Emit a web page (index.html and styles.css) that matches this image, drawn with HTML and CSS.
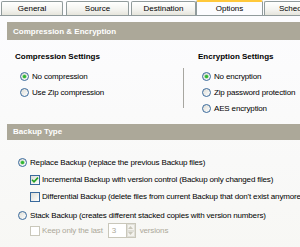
FILE: index.html
```html
<!DOCTYPE html>
<html>
<head>
<meta charset="utf-8">
<link rel="stylesheet" href="styles.css">
</head>
<body>
<div class="tabs">
  <div class="tab w1">General</div>
  <div class="tab w2">Source</div>
  <div class="tab w3">Destination</div>
  <div class="tab sel">Options</div>
  <div class="tab w5">Sched</div>
</div>
<div class="page">
  <div class="hdr h1">Compression &amp; Encryption</div>
  <div class="cols">
    <div class="comp">
      <div class="title">Compression Settings</div>
      <div class="opts">
        <div class="row"><span class="radio on"></span>No compression</div>
        <div class="row"><span class="radio"></span>Use Zip compression</div>
      </div>
    </div>
    <div class="enc">
      <div class="title etitle">Encryption Settings</div>
      <div class="encbody">
        <div class="sep"></div>
        <div class="opts eopts">
          <div class="row"><span class="radio on"></span>No encryption</div>
          <div class="row"><span class="radio"></span>Zip password protection</div>
          <div class="row"><span class="radio"></span>AES encryption</div>
        </div>
      </div>
    </div>
  </div>
  <div class="hdr h2">Backup Type</div>
  <div class="backup">
    <div class="brow r1"><span class="radio on"></span>Replace Backup (replace the previous Backup files)</div>
    <div class="brow sub"><span class="check on"><svg width="8" height="8" viewBox="0 0 8 8"><path d="M1 3.8 L3 5.8 L7 1.6" fill="none" stroke="#21a121" stroke-width="1.6"/></svg></span>Incremental Backup with version control (Backup only changed files)</div>
    <div class="brow sub"><span class="check"></span><span class="clip">Differential Backup (delete files from current Backup that don't exist anymore</span></div>
    <div class="brow r4"><span class="radio"></span>Stack Backup (creates different stacked copies with version numbers)</div>
    <div class="brow sub r5 dis"><span class="check off"></span>Keep only the last<span class="spin"><span class="field">3</span><span class="arrows"><span class="ab"><svg width="5" height="3" viewBox="0 0 5 3"><path d="M0 3 L2.5 0 L5 3Z" fill="#c9c7ba"/></svg></span><span class="ab"><svg width="5" height="3" viewBox="0 0 5 3"><path d="M0 0 L2.5 3 L5 0Z" fill="#c9c7ba"/></svg></span></span></span>versions</div>
  </div>
</div>
</body>
</html>
```
FILE: styles.css
```css
html, body {
  margin: 0;
  padding: 0;
}
body {
  width: 300px;
  height: 247px;
  overflow: hidden;
  font-family: "Liberation Sans", Arial, sans-serif;
  font-size: 8px;
  letter-spacing: -0.16px;
  color: #000;
  background: #fcfcfe;
}
.tabs {
  display: flex;
  align-items: flex-end;
  height: 15px;
  border-bottom: 1px solid #919b9c;
  padding-left: 1px;
  white-space: nowrap;
  overflow: hidden;
}
.tab {
  box-sizing: border-box;
  height: 14px;
  border: 1px solid #919b9c;
  border-bottom: none;
  border-radius: 2px 2px 0 0;
  background: linear-gradient(#ffffff, #f3f3ef 60%, #e6e5dc);
  display: flex;
  align-items: center;
  justify-content: center;
  margin-right: 3px;
  flex: none;
  letter-spacing: 0;
}
.w1 { width: 62px; }
.w2 { width: 63px; margin-right: 2px; }
.w3 { width: 65px; margin-right: 0; }
.w5 { width: 36px; justify-content: flex-start; padding-left: 14px; margin-left: 1px; margin-right: 0; border-right: none; border-radius: 2px 0 0 0; }
.sel {
  width: 67px;
  height: 16px;
  margin-bottom: -1px;
  margin-right: 0;
  background: #fcfcfe;
  border-top: 2px solid #ffc83c;
  padding-bottom: 2px;
}
.page {
  background: linear-gradient(#fcfcfe, #f7f7f4);
  height: 231px;
}
.hdr {
  margin-left: 7px;
  background: #aca899;
  color: #fff;
  font-weight: bold;
  padding-left: 6px;
  white-space: nowrap;
  letter-spacing: 0;
}
.h1 {
  margin-top: 6px;
  height: 18px;
  line-height: 19px;
}
.h2 {
  margin-top: 8px;
  height: 16px;
  line-height: 15px;
}
.cols {
  display: grid;
  grid-template-columns: 183px 1fr;
  margin-top: 11px;
}
.comp {
  padding-left: 15px;
}
.title {
  font-weight: bold;
  height: 12px;
  line-height: 12px;
  white-space: nowrap;
  letter-spacing: 0;
}
.opts {
  margin-top: 5px;
  padding-left: 5px;
}
.row {
  height: 16px;
  display: flex;
  align-items: center;
  white-space: nowrap;
}
.etitle {
  margin-left: 15px;
}
.encbody {
  display: flex;
  margin-top: 5px;
}
.sep {
  width: 1px;
  height: 40px;
  background: #a7a6a0;
  flex: none;
}
.eopts {
  margin-top: 0;
  padding-left: 18px;
}
.radio {
  box-sizing: border-box;
  width: 9px;
  height: 9px;
  border-radius: 50%;
  border: 1px solid #3a6a9c;
  background: linear-gradient(135deg, #dcdcd5, #ffffff);
  margin-right: 3px;
  flex: none;
  display: flex;
  align-items: center;
  justify-content: center;
}
.radio.on::after {
  content: "";
  width: 3px;
  height: 3px;
  border-radius: 50%;
  background: #2fb52f;
  box-shadow: 0 0 0 0.6px #7ad07a;
}
.check {
  box-sizing: border-box;
  width: 10px;
  height: 10px;
  border: 1px solid #3a6a9c;
  background: linear-gradient(135deg, #dcdcd5, #ffffff);
  margin-right: 2px;
  flex: none;
  display: flex;
  align-items: center;
  justify-content: center;
}
.check.off {
  border-color: #cac8bb;
  background: #ffffff;
}
.backup {
  padding-left: 18px;
}
.brow {
  display: flex;
  align-items: center;
  white-space: nowrap;
  height: 17px;
}
.clip {
  overflow: hidden;
  min-width: 0;
  flex: 1;
}
.r1 { margin-top: 14px; }
.sub { padding-left: 12px; }
.r4 { margin-top: 3px; height: 15px; }
.r5 { height: 15px; }
.dis { color: #aca899; }
.spin {
  display: flex;
  margin-left: 5px;
  margin-right: 4px;
  height: 15px;
}
.field {
  box-sizing: border-box;
  width: 18px;
  height: 15px;
  border: 1px solid #c9c7ba;
  border-right: none;
  background: #fff;
  padding-left: 3px;
  line-height: 13px;
  color: #aca899;
}
.arrows {
  display: flex;
  flex-direction: column;
  width: 10px;
  border: 1px solid #c9c7ba;
  box-sizing: border-box;
  background: #fff;
}
.ab {
  flex: 1;
  display: flex;
  align-items: center;
  justify-content: center;
  background: #f4f3ee;
  border: 0.5px solid #e0dfd8;
}
```
